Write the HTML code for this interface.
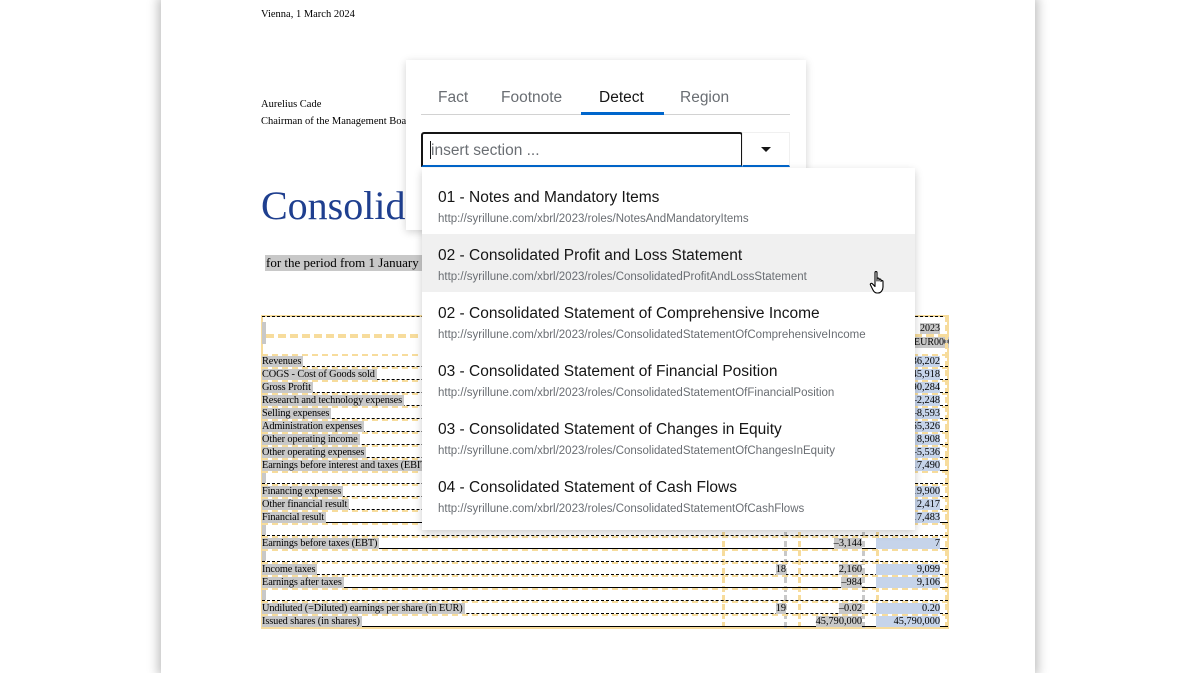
<!DOCTYPE html>
<html><head><meta charset="utf-8"><style>
*{margin:0;padding:0;box-sizing:border-box}
body{width:1198px;height:673px;overflow:hidden;background:#fff;position:relative;font-family:"Liberation Serif",serif}
.page{position:absolute;left:161px;top:0;width:874px;height:673px;background:#fff;box-shadow:0 0 10px 3px rgba(0,0,0,.25)}
.a{position:absolute}
.t{font-size:10.5px;color:#000;white-space:nowrap}
.row{position:absolute;left:262px;width:686px;height:13px;border-bottom:1px dashed #000;border-top:2px dashed #f7dc9c;font-size:10.3px;line-height:11px}
.row.s{border-bottom:1.5px solid #000}
.lb{position:absolute;left:0;top:0;background:#c8c8c8;padding-right:2px;letter-spacing:-.1px}
.n{position:absolute;right:162px;top:0;background:#c8c8c8}
.p{position:absolute;right:86px;top:0;background:#c8c8c8}
.c{position:absolute;right:8px;top:0;width:64px;text-align:right;background:#c6d4ea}
.vl{position:absolute;top:316px;height:312px;border-left:3px dashed #f7dc9c}
.vg{position:absolute;top:316px;height:312px;border-left:3px dashed #c8c8c8}
.pop{position:absolute;left:406px;top:60px;width:400px;height:170px;background:#fff;box-shadow:0 2px 8px rgba(0,0,0,.18);font-family:"Liberation Sans",sans-serif}
.tab{position:absolute;top:29px;font-size:15.5px;color:#6a6e73}
.menu{position:absolute;left:422px;top:168px;width:493px;height:362px;background:#fff;box-shadow:0 3px 8px rgba(0,0,0,.2);font-family:"Liberation Sans",sans-serif}
.it{position:absolute;left:0;width:493px;height:58px}
.it .h{position:absolute;left:16px;top:13px;font-size:15.5px;color:#151515;white-space:nowrap}
.it .u{position:absolute;left:16px;top:37px;font-size:11.5px;color:#6a6e73;white-space:nowrap}
</style></head><body>
<div class="page"></div>
<div class="a t" style="left:261px;top:9px">Vienna, 1 March 2024</div>
<div class="a t" style="left:261px;top:99px">Aurelius Cade</div>
<div class="a t" style="left:261px;top:116px">Chairman of the Management Board</div>
<div class="a" style="left:261px;top:182px;font-size:40px;color:#1f3f8f;white-space:nowrap">Consolidated</div>
<div class="a" style="left:265px;top:255px;font-size:13px;background:#c8c8c8;padding:0 1px;white-space:nowrap">for the period from 1 January 2023</div>

<div class="a" style="left:261px;top:315px;width:688px;height:314px;border:2px solid #f7dc9c"></div>
<div class="a" style="left:266px;top:334px;width:680px;border-top:4px dashed #f7dc9c"></div>
<div class="a" style="left:262px;top:322px;width:4px;height:22px;background:#c8c8c8"></div>
<div class="a" style="left:262px;top:316px;width:686px;border-top:1px dashed #000"></div>
<div class="a" style="left:920px;top:323px;font-size:10px;background:#c8c8c8">2023</div>
<div class="a" style="left:914px;top:337px;font-size:10px;background:#c8c8c8">EUR000</div>
<div class="vl" style="left:722px"></div>
<div class="vg" style="left:784px"></div>
<div class="vl" style="left:798px"></div>
<div class="vg" style="left:862px"></div>
<div class="vl" style="left:876px"></div>
<div class="vl" style="left:945px"></div>

<div class="row" style="top:354px"><span class="lb">Revenues</span><span class="c">36,202</span></div>
<div class="row" style="top:367px"><span class="lb">COGS - Cost of Goods sold</span><span class="c">–45,918</span></div>
<div class="row" style="top:380px"><span class="lb">Gross Profit</span><span class="c">90,284</span></div>
<div class="row" style="top:393px"><span class="lb">Research and technology expenses</span><span class="c">–2,248</span></div>
<div class="row" style="top:406px"><span class="lb">Selling expenses</span><span class="c">–8,593</span></div>
<div class="row" style="top:419px"><span class="lb">Administration expenses</span><span class="c">–65,326</span></div>
<div class="row" style="top:432px"><span class="lb">Other operating income</span><span class="c">8,908</span></div>
<div class="row" style="top:445px"><span class="lb">Other operating expenses</span><span class="c">–5,536</span></div>
<div class="row s" style="top:458px"><span class="lb">Earnings before interest and taxes (EBIT)</span><span class="c">17,490</span></div>
<div class="row" style="top:471px"><span class="lb" style="width:4px;height:10px"></span></div>
<div class="row" style="top:484px"><span class="lb">Financing expenses</span><span class="c">–19,900</span></div>
<div class="row" style="top:497px"><span class="lb">Other financial result</span><span class="c">2,417</span></div>
<div class="row s" style="top:510px"><span class="lb">Financial result</span><span class="c">–17,483</span></div>
<div class="row" style="top:523px"><span class="lb" style="width:4px;height:10px"></span></div>
<div class="row s" style="top:536px"><span class="lb">Earnings before taxes (EBT)</span><span class="p">–3,144</span><span class="c">7</span></div>
<div class="row" style="top:549px"><span class="lb" style="width:4px;height:10px"></span></div>
<div class="row" style="top:562px"><span class="lb">Income taxes</span><span class="n">18</span><span class="p">2,160</span><span class="c">9,099</span></div>
<div class="row s" style="top:575px"><span class="lb">Earnings after taxes</span><span class="p">–984</span><span class="c">9,106</span></div>
<div class="row" style="top:588px"><span class="lb" style="width:4px;height:10px"></span></div>
<div class="row" style="top:601px"><span class="lb">Undiluted (=Diluted) earnings per share (in EUR)</span><span class="n">19</span><span class="p">–0.02</span><span class="c">0.20</span></div>
<div class="row s" style="top:614px"><span class="lb">Issued shares (in shares)</span><span class="p">45,790,000</span><span class="c">45,790,000</span></div>

<div class="pop">
 <div class="tab" style="left:32px">Fact</div>
 <div class="tab" style="left:95px">Footnote</div>
 <div class="tab" style="left:193px;color:#151515">Detect</div>
 <div class="tab" style="left:274px">Region</div>
 <div class="a" style="left:15px;top:54px;width:369px;height:1px;background:#d2d2d2"></div>
 <div class="a" style="left:175px;top:52px;width:83px;height:3px;background:#0066cc"></div>
 <div class="a" style="left:15px;top:72px;width:322px;height:35px;border:2px solid #151515;border-bottom:2px solid #0066cc;border-radius:3px 3px 0 0"></div>
 <div class="a" style="left:24px;top:81px;width:1px;height:18px;background:#151515"></div>
 <div class="a" style="left:25px;top:82px;font-size:15.5px;color:#6a6e73">insert section ...</div>
 <div class="a" style="left:336px;top:72px;width:48px;height:35px;border:1px solid #f0f0f0;border-bottom:2px solid #0066cc"></div>
 <div class="a" style="left:355px;top:87px;width:0;height:0;border-left:5px solid transparent;border-right:5px solid transparent;border-top:5px solid #151515"></div>
</div>

<div class="menu">
 <div class="it" style="top:8px"><div class="h">01 - Notes and Mandatory Items</div><div class="u">http://syrillune.com/xbrl/2023/roles/NotesAndMandatoryItems</div></div>
 <div class="it" style="top:66px;background:#f0f0f0"><div class="h">02 - Consolidated Profit and Loss Statement</div><div class="u">http://syrillune.com/xbrl/2023/roles/ConsolidatedProfitAndLossStatement</div></div>
 <div class="it" style="top:124px"><div class="h">02 - Consolidated Statement of Comprehensive Income</div><div class="u">http://syrillune.com/xbrl/2023/roles/ConsolidatedStatementOfComprehensiveIncome</div></div>
 <div class="it" style="top:182px"><div class="h">03 - Consolidated Statement of Financial Position</div><div class="u">http://syrillune.com/xbrl/2023/roles/ConsolidatedStatementOfFinancialPosition</div></div>
 <div class="it" style="top:240px"><div class="h">03 - Consolidated Statement of Changes in Equity</div><div class="u">http://syrillune.com/xbrl/2023/roles/ConsolidatedStatementOfChangesInEquity</div></div>
 <div class="it" style="top:298px"><div class="h">04 - Consolidated Statement of Cash Flows</div><div class="u">http://syrillune.com/xbrl/2023/roles/ConsolidatedStatementOfCashFlows</div></div>
</div>

<svg class="a" style="left:869px;top:270px" width="20" height="26" viewBox="0 0 20 26"><path d="M6 2.5c0-1.2 2-1.2 2 0V11V9c0-1.2 2-1.2 2 0v2V10c0-1.2 2-1.2 2 0v1.5c0-1.2 2-1.2 2 0V17c0 3-2 6-5 6H8c-2 0-3-1-4-3L1.5 15c-.7-1.2.8-2.3 1.8-1.3L6 16.5Z" fill="#fff" stroke="#000" stroke-width="1.1" stroke-linejoin="round"/></svg>
</body></html>
